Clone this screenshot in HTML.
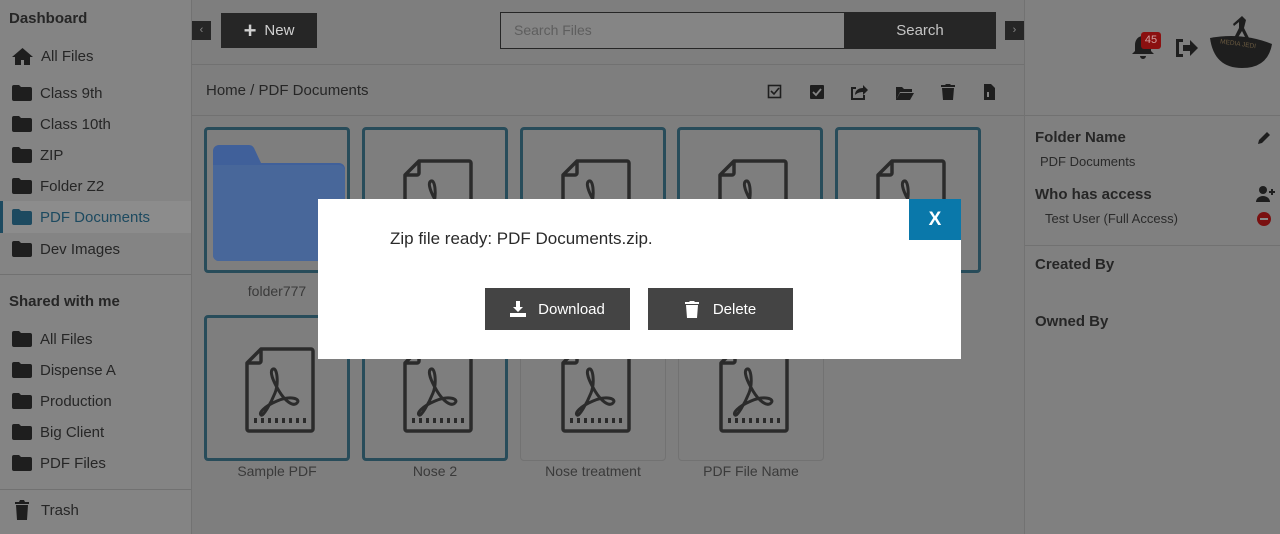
<!DOCTYPE html>
<html><head><meta charset="utf-8">
<style>
*{box-sizing:border-box;margin:0;padding:0}
body{width:1280px;height:534px;overflow:hidden;background:#7e7e7e;font-family:"Liberation Sans",sans-serif;color:#1f1f1f;position:relative}
.a{position:absolute}
#side{left:0;top:0;width:192px;height:534px;background:#848484;border-right:1px solid #727272}
.h{font-weight:bold;font-size:15px;color:#262626}
.it{position:absolute;left:12px;font-size:15px;color:#262626;display:flex;align-items:center;height:20px}
.it svg{margin-right:8px}
.hr{position:absolute;left:0;width:191px;height:1px;background:#717171}
.tile{position:absolute;width:146px;height:146px;border:3px solid #284c5a;border-radius:4px}
.tile.t{border:1px solid #727272}
.lbl{position:absolute;width:146px;text-align:center;font-size:14px;color:#3a3a3a}
.btn{position:absolute;background:#444;color:#fff;font-size:15px;display:flex;align-items:center;justify-content:center}
</style></head><body>
<svg width="0" height="0" style="position:absolute">
<defs>
<symbol id="fld" viewBox="0 0 20 16"><path d="M0 2a2 2 0 0 1 2-2h5l2 2h9a2 2 0 0 1 2 2v10a2 2 0 0 1-2 2H2a2 2 0 0 1-2-2z" fill="#1e1e1e"/></symbol>
<symbol id="pdf" viewBox="0 0 70 86"><g fill="none" stroke="#2b2b2b" stroke-width="3.5" stroke-linejoin="round"><path d="M16 2h50a2 2 0 0 1 2 2v78a2 2 0 0 1-2 2H4a2 2 0 0 1-2-2V16z"/><path d="M2 16h12a2 2 0 0 0 2-2V2"/><path d="M28 22c-4 2 0 12 6 22s14 16 18 12-6-8-20-2-18 12-16 14 10-12 14-22 2-26-2-24z" stroke-width="3"/></g><g fill="#2b2b2b"><rect x="9" y="71" width="3" height="5"/><rect x="16" y="71" width="3" height="5"/><rect x="23" y="71" width="3" height="5"/><rect x="30" y="71" width="3" height="5"/><rect x="37" y="71" width="3" height="5"/><rect x="44" y="71" width="3" height="5"/><rect x="51" y="71" width="3" height="5"/><rect x="58" y="71" width="3" height="5"/></g></symbol>
</defs></svg>

<div id="side" class="a">
<div class="a h" style="left:9px;top:10px">Dashboard</div>
<div class="it" style="top:46px"><svg width="21" height="17" viewBox="0 0 21 17"><path d="M10.5 0L0 9h3v8h6v-5h3v5h6V9h3z" fill="#1e1e1e"/></svg>All Files</div>
<div class="it" style="top:83px"><svg width="20" height="16"><use href="#fld"/></svg>Class 9th</div>
<div class="it" style="top:114px"><svg width="20" height="16"><use href="#fld"/></svg>Class 10th</div>
<div class="it" style="top:145px"><svg width="20" height="16"><use href="#fld"/></svg>ZIP</div>
<div class="it" style="top:176px"><svg width="20" height="16"><use href="#fld"/></svg>Folder Z2</div>
<div class="a" style="left:0;top:201px;width:191px;height:32px;background:#8c8c8c;border-left:3px solid #1d4a60"></div>
<div class="it" style="top:207px;color:#1d4a60"><svg width="20" height="16" viewBox="0 0 20 16"><path d="M0 2a2 2 0 0 1 2-2h5l2 2h9a2 2 0 0 1 2 2v10a2 2 0 0 1-2 2H2a2 2 0 0 1-2-2z" fill="#1d4a60"/></svg>PDF Documents</div>
<div class="it" style="top:239px"><svg width="20" height="16"><use href="#fld"/></svg>Dev Images</div>
<div class="hr" style="top:274px"></div>
<div class="a h" style="left:9px;top:293px">Shared with me</div>
<div class="it" style="top:329px"><svg width="20" height="16"><use href="#fld"/></svg>All Files</div>
<div class="it" style="top:360px"><svg width="20" height="16"><use href="#fld"/></svg>Dispense A</div>
<div class="it" style="top:391px"><svg width="20" height="16"><use href="#fld"/></svg>Production</div>
<div class="it" style="top:422px"><svg width="20" height="16"><use href="#fld"/></svg>Big Client</div>
<div class="it" style="top:453px"><svg width="20" height="16"><use href="#fld"/></svg>PDF Files</div>
<div class="hr" style="top:489px"></div>
<div class="it" style="top:500px"><svg width="20" height="20" viewBox="0 0 16 20" style="margin-right:9px"><path d="M1 2h4l1-2h4l1 2h4v2H1zM2 5h12l-1 15H3z" fill="#1e1e1e"/></svg>Trash</div>
</div>

<div class="a" style="left:192px;top:21px;width:19px;height:19px;background:#262626;color:#888;font-size:11px;text-align:center;line-height:19px">‹</div>
<div class="btn" style="left:221px;top:13px;width:96px;height:35px;background:#262626;color:#d0d0d0"><span style="font-size:22px;font-weight:bold;margin-right:8px;line-height:1">+</span>New</div>
<div class="a" style="left:500px;top:12px;width:345px;height:37px;border:1px solid #262626;background:#858585;font-size:14px;color:#5e5e5e;padding:9px 13px">Search Files</div>
<div class="btn" style="left:844px;top:12px;width:152px;height:37px;background:#262626;color:#c4c4c4">Search</div>
<div class="a" style="left:1005px;top:21px;width:19px;height:19px;background:#262626;color:#888;font-size:11px;text-align:center;line-height:19px">›</div>
<div class="a" style="left:192px;top:64px;width:832px;height:1px;background:#717171"></div>
<div class="a" style="left:206px;top:82px;font-size:15px;color:#262626">Home / PDF Documents</div>
<svg class="a" style="left:766px;top:82px" width="240" height="20" viewBox="0 0 240 20" fill="#1e1e1e">
<rect x="2.5" y="3.5" width="12" height="12" fill="none" stroke="#1e1e1e" stroke-width="1.6"/><path d="M5 9l3 3 5-6" fill="none" stroke="#1e1e1e" stroke-width="1.6"/>
<rect x="44" y="3" width="14" height="14" rx="1"/><path d="M47 10l3 3 5-6" fill="none" stroke="#858585" stroke-width="1.8"/>
<path d="M85 5h5v2h-3v9h10v-3h2v5H85z"/><path d="M89 13c0-5 4-7 8-7V3l5 5-5 5v-3c-3 0-6 1-8 3z"/>
<path d="M130 5h6l2 2h8v3h-12l-4 8zM134 11h14l-4 7h-14z"/>
<path d="M175 3h4l1-1h4l1 1h4v2h-14zM176 6h12l-1 12h-10z"/>
<path d="M218 2h7l4 4v12h-11z"/><rect x="221" y="10" width="2" height="5" fill="#858585"/>
</svg>
<div class="a" style="left:192px;top:115px;width:832px;height:1px;background:#717171"></div>

<div class="tile" style="left:204px;top:127px"><svg class="a" style="left:6px;top:11px" width="132" height="120" viewBox="0 0 132 120"><path d="M6 4h30a6 6 0 0 1 5 3l7 15h78a6 6 0 0 1 6 6v86a6 6 0 0 1-6 6H6a6 6 0 0 1-6-6V10a6 6 0 0 1 6-6z" fill="#40609a"/><path d="M0 24h126a6 6 0 0 1 6 6v84a6 6 0 0 1-6 6H6a6 6 0 0 1-6-6z" fill="#48679a"/></svg></div>
<div class="lbl" style="left:204px;top:283px">folder777</div>
<div class="tile" style="left:362px;top:127px"><svg class="a" style="left:38px;top:29px" width="70" height="86"><use href="#pdf"/></svg></div>
<div class="tile" style="left:520px;top:127px"><svg class="a" style="left:38px;top:29px" width="70" height="86"><use href="#pdf"/></svg></div>
<div class="tile" style="left:677px;top:127px"><svg class="a" style="left:38px;top:29px" width="70" height="86"><use href="#pdf"/></svg></div>
<div class="tile" style="left:835px;top:127px"><svg class="a" style="left:38px;top:29px" width="70" height="86"><use href="#pdf"/></svg></div>

<div class="tile" style="left:204px;top:315px"><svg class="a" style="left:38px;top:29px" width="70" height="86"><use href="#pdf"/></svg></div>
<div class="lbl" style="left:204px;top:463px">Sample PDF</div>
<div class="tile" style="left:362px;top:315px"><svg class="a" style="left:38px;top:29px" width="70" height="86"><use href="#pdf"/></svg></div>
<div class="lbl" style="left:362px;top:463px">Nose 2</div>
<div class="tile t" style="left:520px;top:315px"><svg class="a" style="left:40px;top:31px" width="70" height="86"><use href="#pdf"/></svg></div>
<div class="lbl" style="left:520px;top:463px">Nose treatment</div>
<div class="tile t" style="left:678px;top:315px"><svg class="a" style="left:40px;top:31px" width="70" height="86"><use href="#pdf"/></svg></div>
<div class="lbl" style="left:678px;top:463px">PDF File Name</div>

<div class="a" style="left:1024px;top:0;width:256px;height:534px;background:#808080;border-left:1px solid #727272"></div>
<div class="a" style="left:1025px;top:115px;width:255px;height:1px;background:#717171"></div>
<svg class="a" style="left:1130px;top:34px" width="26" height="26" viewBox="0 0 26 26"><path d="M13 2c-5 0-8 4-8 9v6l-3 3h22l-3-3v-6c0-5-3-9-8-9zM10 22h6a3 3 0 0 1-6 0z" fill="#1e1e1e"/></svg>
<div class="a" style="left:1141px;top:32px;width:20px;height:17px;background:#8b1010;color:#d0a0a0;font-size:11px;text-align:center;line-height:17px;border-radius:3px">45</div>
<svg class="a" style="left:1174px;top:37px" width="26" height="22" viewBox="0 0 26 22"><path d="M2 2h7v3H5v12h4v3H2z" fill="#1e1e1e"/><path d="M9 8h7V3l8 8-8 8v-5H9z" fill="#1e1e1e"/></svg>
<svg class="a" style="left:1208px;top:14px" width="66" height="56" viewBox="0 0 66 56"><path d="M2 24q32 -6 62 6q-4 24 -30 24q-28 0 -32 -30z" fill="#1e1e1e"/><path d="M34 2l4 4-2 8 5 10-3 1-4-8-5 8-3-1 5-10v-6l-5 4-1-2z" fill="#1e1e1e"/><text x="12" y="32" font-size="6.5" fill="#6a5a40" font-family="Liberation Sans" transform="rotate(8 32 30)">MEDIA JEDI</text></svg>
<div class="a h" style="left:1035px;top:129px">Folder Name</div>
<svg class="a" style="left:1256px;top:130px" width="16" height="16" viewBox="0 0 16 16"><path d="M2 14l1-4 8-8 3 3-8 8z" fill="#1e1e1e"/></svg>
<div class="a" style="left:1040px;top:154px;font-size:13px;color:#2a2a2a">PDF Documents</div>
<div class="a h" style="left:1035px;top:186px">Who has access</div>
<svg class="a" style="left:1256px;top:186px" width="20" height="16" viewBox="0 0 20 16"><circle cx="7" cy="4" r="4" fill="#1e1e1e"/><path d="M0 16a7 6 0 0 1 14 0z" fill="#1e1e1e"/><path d="M16 3v6M13 6h6" stroke="#1e1e1e" stroke-width="2"/></svg>
<div class="a" style="left:1045px;top:211px;font-size:13px;color:#2a2a2a">Test User (Full Access)</div>
<div class="a" style="left:1257px;top:212px;width:14px;height:14px;border-radius:50%;background:#7a1010"><div class="a" style="left:3px;top:6px;width:8px;height:2px;background:#888"></div></div>
<div class="a" style="left:1025px;top:245px;width:255px;height:1px;background:#717171"></div>
<div class="a h" style="left:1035px;top:256px">Created By</div>
<div class="a h" style="left:1035px;top:313px">Owned By</div>

<div class="a" style="left:318px;top:199px;width:643px;height:160px;background:#fff"></div>
<div class="a" style="left:909px;top:199px;width:52px;height:41px;background:#0a78aa;color:#fff;font-weight:bold;font-size:19px;text-align:center;line-height:41px">X</div>
<div class="a" style="left:390px;top:229px;font-size:17px;color:#2a2a2a">Zip file ready: PDF Documents.zip.</div>
<div class="btn" style="left:485px;top:288px;width:145px;height:42px"><svg width="16" height="16" viewBox="0 0 16 16" style="margin-right:12px"><path d="M6 0h4v6h3l-5 5-5-5h3z" fill="#fff"/><path d="M0 12h16v4H0z" fill="#fff"/></svg>Download</div>
<div class="btn" style="left:648px;top:288px;width:145px;height:42px"><svg width="14" height="17" viewBox="0 0 14 17" style="margin-right:14px"><path d="M0 1h4l1-1h4l1 1h4v2H0zM1 4h12l-1 13H2z" fill="#fff"/></svg>Delete</div>
</body></html>
